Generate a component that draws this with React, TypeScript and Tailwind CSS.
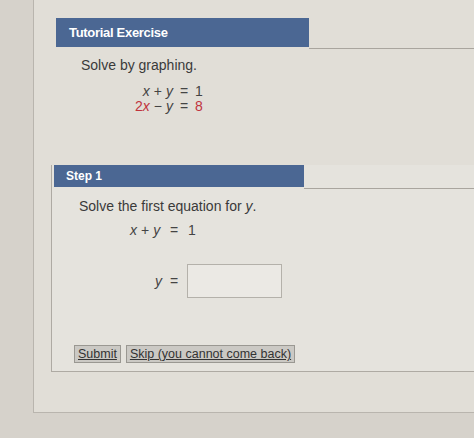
import React from "react";

const font = { fontFamily: '"Liberation Sans", Arial, sans-serif' };

function Op({ children }: { children: React.ReactNode }) {
  return <span className="px-[4px]">{children}</span>;
}

export default function App() {
  return (
    <div className="h-[438px] w-[474px] overflow-hidden bg-[#d6d2cb] text-[#3a3a3a]" style={font}>
      <div className="ml-[33px] h-[413px] border-b border-l border-[#b9b5ae] bg-[#e1ded7] pt-[18px]">
        {/* header */}
        <div className="ml-[22px] flex items-end">
          <div className="h-[29px] w-[253px] bg-[#4b6793] pl-[13px] text-[13px] font-bold leading-[29px] tracking-[-0.3px] text-white">
            Tutorial Exercise
          </div>
          <div className="mb-[-2px] flex-1 border-b border-[#a9a59e]" />
        </div>

        <p className="mt-[9px] pl-[47px] text-[14px] leading-[18px]">Solve by graphing.</p>

        <div className="mt-[10px] ml-[100px] grid w-fit grid-cols-[39px_22px_12px] text-[14px] leading-[15px] text-[#444]">
          <span className="whitespace-nowrap text-right">
            <i>x</i>
            <Op>+</Op>
            <i>y</i>
          </span>
          <span className="text-center">=</span>
          <span>1</span>
          <span className="whitespace-nowrap text-right">
            <span className="text-[#c0333d]">
              2<i>x</i>
            </span>
            <Op>−</Op>
            <i>y</i>
          </span>
          <span className="text-center">=</span>
          <span className="text-[#c0333d]">8</span>
        </div>

        {/* step 1 */}
        <div className="mt-[51px] ml-[17px] h-[207px] border-b border-l border-[#aeaaa3] bg-[#e5e3dd]">
          <div className="flex items-end">
            <div className="ml-[2px] h-[22px] w-[250px] bg-[#4b6793] pl-[12px] text-[12px] font-bold leading-[22px] text-white">
              Step 1
            </div>
            <div className="mb-[-2px] flex-1 border-b border-[#a9a59e]" />
          </div>

          <p className="mt-[10px] pl-[27px] text-[14px] leading-[18px]">
            Solve the first equation for <i>y</i>.
          </p>

          <div className="mt-[7px] ml-[78px] grid w-fit grid-cols-[30px_28px_12px] text-[14px] leading-[16px] text-[#444]">
            <span className="whitespace-nowrap text-right">
              <i>x</i>
              <Op>+</Op>
              <i>y</i>
            </span>
            <span className="text-center">=</span>
            <span>1</span>
          </div>

          <div className="mt-[26px] flex items-center pl-[103px] text-[14px] text-[#444]">
            <span>
              <i>y</i>
              <span className="pl-[8px]">=</span>
            </span>
            <div className="ml-[9px] h-[34px] w-[95px] border border-[#b4b1aa] bg-[#ebe9e4]" />
          </div>

          <div className="mt-[47px] flex items-start pl-[22px] text-[12.5px] text-[#333]">
            <button className="h-[18px] whitespace-nowrap border border-[#9a9892] bg-[#cbc9c4] px-[3px] leading-[16px] underline">
              Submit
            </button>
            <button className="ml-[5px] h-[18px] whitespace-nowrap border border-[#9a9892] bg-[#cbc9c4] px-[3px] leading-[16px] underline">
              Skip (you cannot come back)
            </button>
          </div>
        </div>
      </div>
    </div>
  );
}
